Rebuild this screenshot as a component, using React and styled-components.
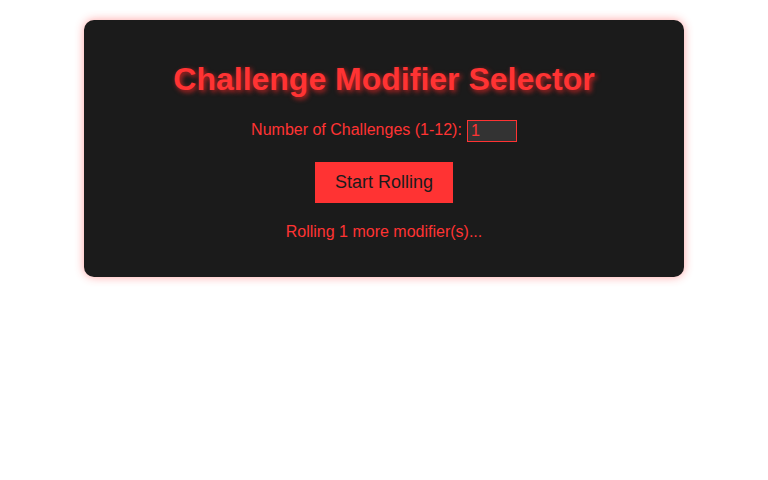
import React, { useState } from "react";
import styled, { createGlobalStyle } from "styled-components";

const red = "#ff3333";
const dark = "#1b1b1b";

const GlobalStyle = createGlobalStyle`
  body {
    margin: 0;
    padding: 20px 0;
    background: #fff;
    font-family: "Liberation Sans", Arial, sans-serif;
  }
`;

const Card = styled.div`
  width: 600px;
  margin: 0 auto;
  padding: 20px;
  box-sizing: border-box;
  background: ${dark};
  border-radius: 10px;
  box-shadow: 0 0 10px rgba(255, 51, 51, 0.45);
  text-align: center;
  color: ${red};
`;

const Title = styled.h1`
  margin: 21px 0 22px;
  font-size: 32px;
  font-weight: bold;
  color: ${red};
  text-shadow: 2px 2px 5px rgba(255, 40, 40, 0.75);
`;

const Field = styled.div`
  font-size: 16px;
  margin-bottom: 20px;
`;

const NumberInput = styled.input`
  width: 50px;
  height: 22px;
  box-sizing: border-box;
  margin-left: 5px;
  padding: 0 3px;
  background: #333;
  border: 1px solid ${red};
  color: ${red};
  font-family: inherit;
  font-size: 16px;
  vertical-align: middle;
  outline: none;
`;

const Button = styled.button`
  padding: 10px 20px;
  border: none;
  background: ${red};
  color: ${dark};
  font-family: inherit;
  font-size: 18px;
  cursor: pointer;
`;

const Status = styled.p`
  margin: 20px 0 16px;
  font-size: 16px;
`;

const App = () => {
  const [count, setCount] = useState(1);

  return (
    <>
      <GlobalStyle />
      <Card>
        <Title>Challenge Modifier Selector</Title>
        <Field>
          Number of Challenges (1-12):
          <NumberInput
            type="text"
            value={count}
            onChange={(e) => setCount(e.target.value)}
          />
        </Field>
        <Button>Start Rolling</Button>
        <Status>Rolling {count} more modifier(s)...</Status>
      </Card>
    </>
  );
};

export default App;
